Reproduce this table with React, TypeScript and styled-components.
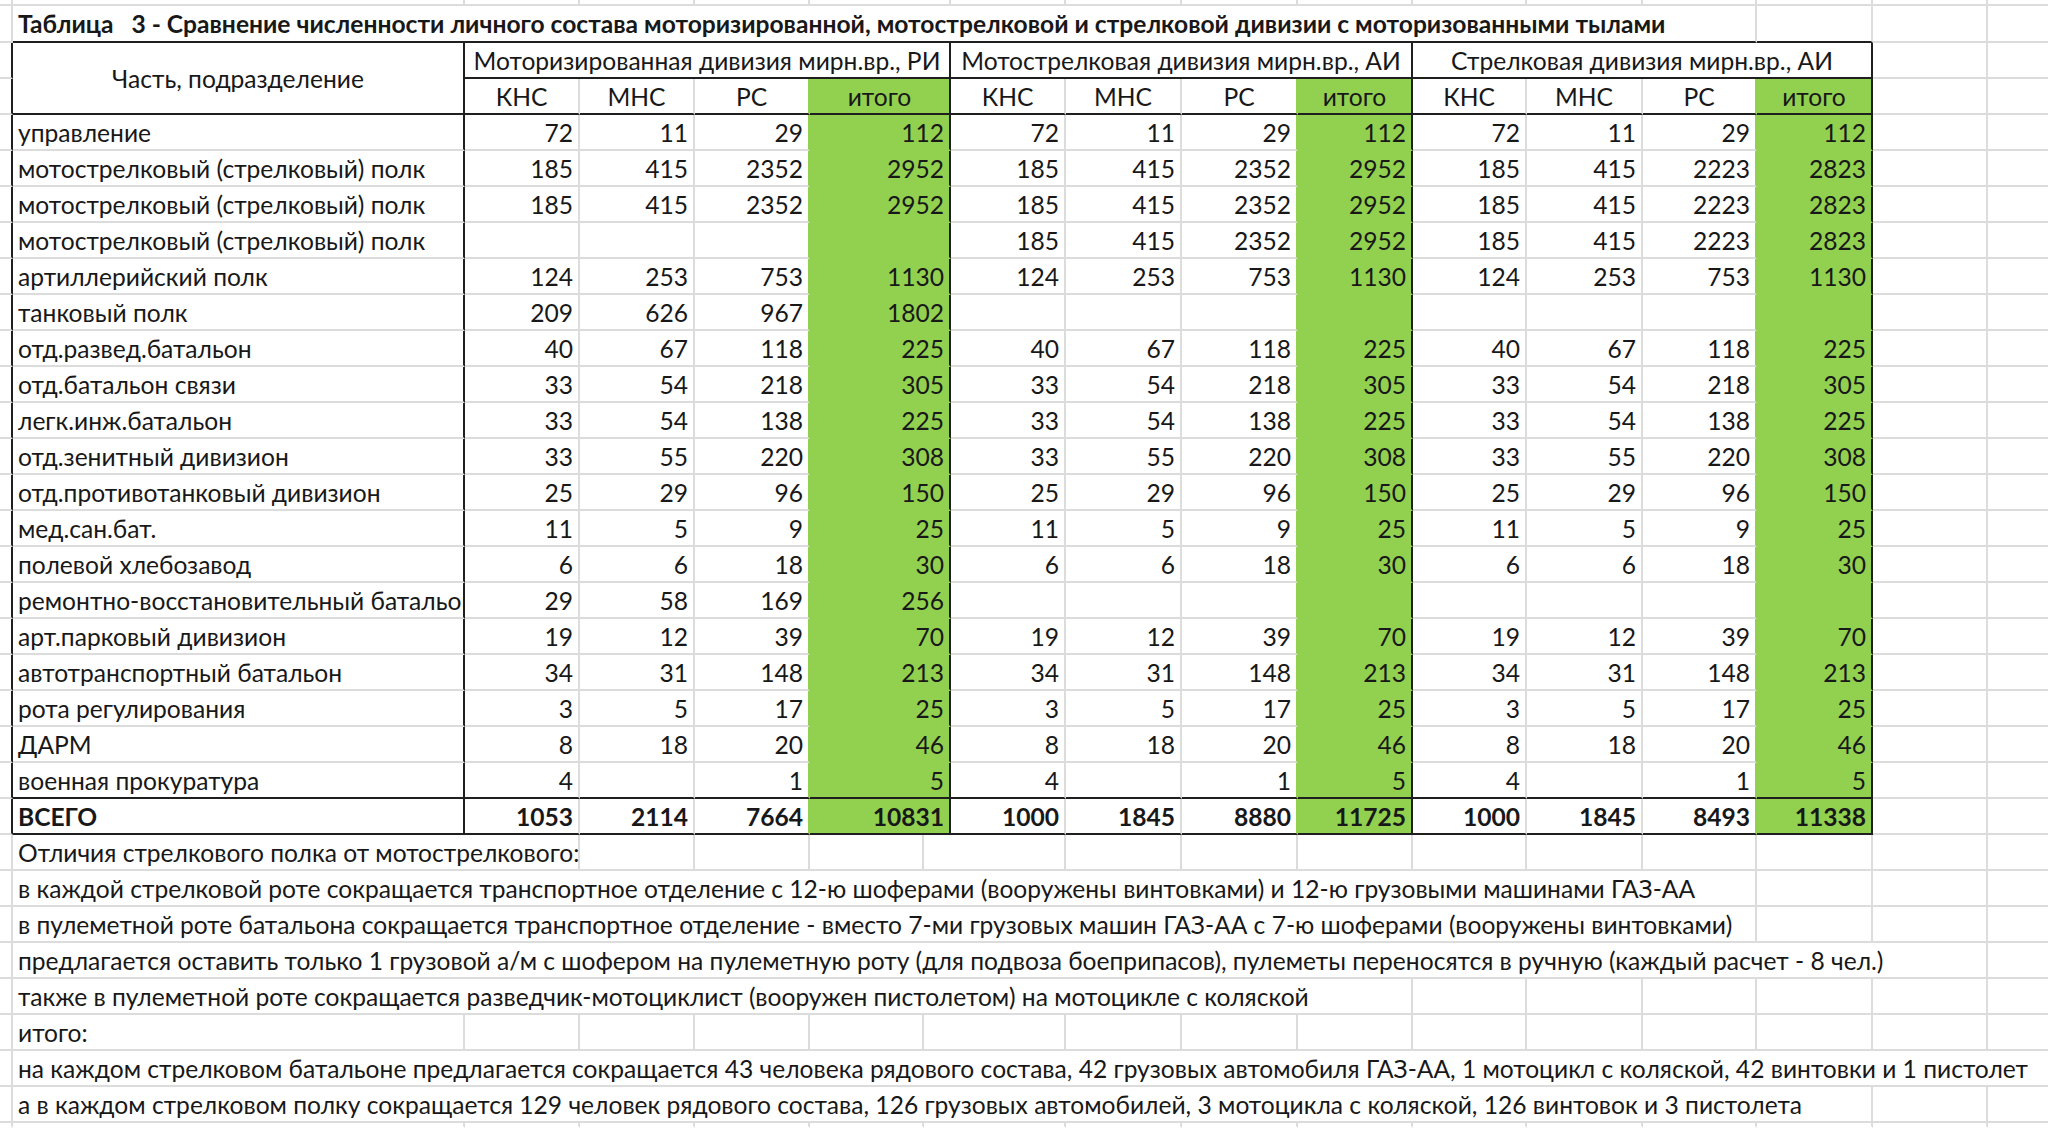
import React from 'react';
import styled, { createGlobalStyle } from 'styled-components';

const GlobalStyle = createGlobalStyle`
  html, body { margin: 0; padding: 0; background: #ffffff; }
  body {
    width: 2048px;
    height: 1128px;
    overflow: hidden;
    font-family: Lato, "Noto Sans", "DejaVu Sans", sans-serif;
    color: #181818;
  }
`;

const TABLE_COLS = [13, 452, 115, 115, 115, 141, 115, 116, 116, 115, 114, 116, 114, 116, 115, 115];
const NOTE_COLS = [13, 452, 115, 115, 115, 114, 142, 116, 116, 115, 114, 116, 114, 116, 115, 115];

type Line = 'black' | 'gray' | 'none' | 'green';
const GREEN = '#92d050';
const lineColor = (l: Line) =>
  l === 'black' ? '#1f1f1f' : l === 'gray' ? '#dcdcdc' : l === 'green' ? GREEN : 'transparent';

const Page = styled.div`
  display: flex;
  flex-direction: column;
  width: 2048px;
  height: 1128px;
  overflow: hidden;
  font-size: 24.6px;
  line-height: 1.2;
`;

const Sheet = styled.div<{ $cols: number[]; $rows: string }>`
  display: grid;
  grid-template-columns: ${(p) => p.$cols.map((c) => `${c}px`).join(' ')};
  grid-template-rows: ${(p) => p.$rows};
  width: 2048px;
  overflow: hidden;
  flex: none;
`;

type CellProps = {
  $span?: number;
  $rows?: number;
  $align?: 'left' | 'right' | 'center';
  $bold?: boolean;
  $fill?: boolean;
  $clip?: boolean;
  $r?: Line;
  $b?: Line;
};

const Cell = styled.div<CellProps>`
  grid-column: span ${(p) => p.$span ?? 1};
  grid-row: span ${(p) => p.$rows ?? 1};
  box-sizing: border-box;
  display: flex;
  align-items: center;
  justify-content: ${(p) =>
    p.$align === 'right' ? 'flex-end' : p.$align === 'center' ? 'center' : 'flex-start'};
  padding: 1px 5px 0 5px;
  min-width: 0;
  white-space: pre;
  font-weight: ${(p) => (p.$bold ? 700 : 400)};
  background: ${(p) => (p.$fill ? GREEN : 'transparent')};
  border-right: 2px solid ${(p) => lineColor(p.$r ?? 'gray')};
  border-bottom: 2px solid ${(p) => lineColor(p.$b ?? 'gray')};
  overflow: ${(p) => (p.$clip ? 'hidden' : 'visible')};
`;

type Vals = [number | null, number | null, number | null, number | null] | null;

const GROUPS = [
  'Моторизированная дивизия мирн.вр., РИ',
  'Мотострелковая дивизия мирн.вр., АИ',
  'Стрелковая дивизия мирн.вр., АИ',
];
const SUB = ['КНС', 'МНС', 'РС', 'итого'];

const same = (v: Vals): Vals[] => [v, v, v];

const DATA: { label: string; g: Vals[] }[] = [
  { label: 'управление', g: same([72, 11, 29, 112]) },
  { label: 'мотострелковый (стрелковый) полк', g: [[185, 415, 2352, 2952], [185, 415, 2352, 2952], [185, 415, 2223, 2823]] },
  { label: 'мотострелковый (стрелковый) полк', g: [[185, 415, 2352, 2952], [185, 415, 2352, 2952], [185, 415, 2223, 2823]] },
  { label: 'мотострелковый (стрелковый) полк', g: [null, [185, 415, 2352, 2952], [185, 415, 2223, 2823]] },
  { label: 'артиллерийский полк', g: same([124, 253, 753, 1130]) },
  { label: 'танковый полк', g: [[209, 626, 967, 1802], null, null] },
  { label: 'отд.развед.батальон', g: same([40, 67, 118, 225]) },
  { label: 'отд.батальон связи', g: same([33, 54, 218, 305]) },
  { label: 'легк.инж.батальон', g: same([33, 54, 138, 225]) },
  { label: 'отд.зенитный дивизион', g: same([33, 55, 220, 308]) },
  { label: 'отд.противотанковый дивизион', g: same([25, 29, 96, 150]) },
  { label: 'мед.сан.бат.', g: same([11, 5, 9, 25]) },
  { label: 'полевой хлебозавод', g: same([6, 6, 18, 30]) },
  { label: 'ремонтно-восстановительный батальон', g: [[29, 58, 169, 256], null, null] },
  { label: 'арт.парковый дивизион', g: same([19, 12, 39, 70]) },
  { label: 'автотранспортный батальон', g: same([34, 31, 148, 213]) },
  { label: 'рота регулирования', g: same([3, 5, 17, 25]) },
  { label: 'ДАРМ', g: same([8, 18, 20, 46]) },
  { label: 'военная прокуратура', g: same([4, null, 1, 5]) },
];

const TOTAL: Vals[] = [
  [1053, 2114, 7664, 10831],
  [1000, 1845, 8880, 11725],
  [1000, 1845, 8493, 11338],
];

const NOTES: { text: string; span: number }[] = [
  { text: 'Отличия стрелкового полка от мотострелкового:', span: 2 },
  { text: 'в каждой стрелковой роте сокращается транспортное отделение с 12-ю шоферами (вооружены винтовками) и 12-ю грузовыми машинами ГАЗ-АА', span: 12 },
  { text: 'в пулеметной роте батальона сокращается транспортное отделение - вместо 7-ми грузовых машин ГАЗ-АА с 7-ю шоферами (вооружены винтовками)', span: 12 },
  { text: 'предлагается оставить только 1 грузовой а/м с шофером на пулеметную роту (для подвоза боеприпасов), пулеметы переносятся в ручную (каждый расчет - 8 чел.)', span: 14 },
  { text: 'также в пулеметной роте сокращается разведчик-мотоциклист (вооружен пистолетом) на мотоцикле с коляской', span: 9 },
  { text: 'итого:', span: 1 },
  { text: 'на каждом стрелковом батальоне предлагается сокращается 43 человека рядового состава, 42 грузовых автомобиля ГАЗ-АА, 1 мотоцикл с коляской, 42 винтовки и 1 пистолет', span: 15 },
  { text: 'а в каждом стрелковом полку сокращается 129 человек рядового состава, 126 грузовых автомобилей, 3 мотоцикла с коляской, 126 винтовок и 3 пистолета', span: 13 },
];

const TITLE =
  'Таблица   3 - Сравнение численности личного состава моторизированной, мотострелковой и стрелковой дивизии с моторизованными тылами';

const Blanks = ({ count, b = 'gray' }: { count: number; b?: Line }) => (
  <>
    {Array.from({ length: count }, (_, i) => (
      <Cell key={i} $b={b} />
    ))}
  </>
);

const GroupCells = ({ groups, bold, last }: { groups: Vals[]; bold?: boolean; last?: boolean }) => (
  <>
    {groups.map((vals, gi) =>
      [0, 1, 2, 3].map((k) => {
        const v = vals ? vals[k] : null;
        const isTotal = k === 3;
        return (
          <Cell
            key={`${gi}-${k}`}
            $align="right"
            $bold={bold}
            $fill={isTotal}
            $r={isTotal ? 'black' : k === 2 ? 'green' : 'gray'}
            $b={last ? 'black' : isTotal ? 'none' : 'gray'}
          >
            {v ?? ''}
          </Cell>
        );
      })
    )}
  </>
);

export default function App() {
  return (
    <>
      <GlobalStyle />
      <Page>
        <Sheet $cols={TABLE_COLS} $rows="6px 37px repeat(22, 36px)">
          {/* partial top row */}
          <Blanks count={16} />

          {/* title row */}
          <Cell />
          <Cell $span={12} $bold $b="black">
            {TITLE}
          </Cell>
          <Cell $b="black" />
          <Blanks count={2} />

          {/* header row 1 */}
          <Cell $r="black" />
          <Cell $rows={2} $align="center" $r="black" $b="black">
            Часть, подразделение
          </Cell>
          {GROUPS.map((g) => (
            <Cell key={g} $span={4} $align="center" $r="black" $b="black">
              {g}
            </Cell>
          ))}
          <Blanks count={2} />

          {/* header row 2 */}
          <Cell $r="black" />
          {GROUPS.map((g) =>
            SUB.map((s, k) => (
              <Cell
                key={`${g}-${s}`}
                $align="center"
                $fill={k === 3}
                $r={k === 3 ? 'black' : k === 2 ? 'green' : 'gray'}
                $b="black"
              >
                {s}
              </Cell>
            ))
          )}
          <Blanks count={2} />

          {/* data rows */}
          {DATA.map((row, i) => {
            const last = i === DATA.length - 1;
            return (
              <React.Fragment key={i}>
                <Cell $r="black" />
                <Cell $r="black" $b={last ? 'black' : 'gray'} $clip>
                  {row.label}
                </Cell>
                <GroupCells groups={row.g} last={last} />
                <Blanks count={2} />
              </React.Fragment>
            );
          })}

          {/* total row */}
          <Cell $r="black" />
          <Cell $r="black" $b="black" $bold>
            ВСЕГО
          </Cell>
          <GroupCells groups={TOTAL} bold last />
          <Blanks count={2} />
        </Sheet>

        <Sheet $cols={NOTE_COLS} $rows="repeat(8, 36px) 5px">
          {NOTES.map((n, i) => (
            <React.Fragment key={`n${i}`}>
              <Cell />
              <Cell $span={n.span}>{n.text}</Cell>
              <Blanks count={15 - n.span} />
            </React.Fragment>
          ))}

          {/* partial bottom row */}
          <Blanks count={16} b="none" />
        </Sheet>
      </Page>
    </>
  );
}
